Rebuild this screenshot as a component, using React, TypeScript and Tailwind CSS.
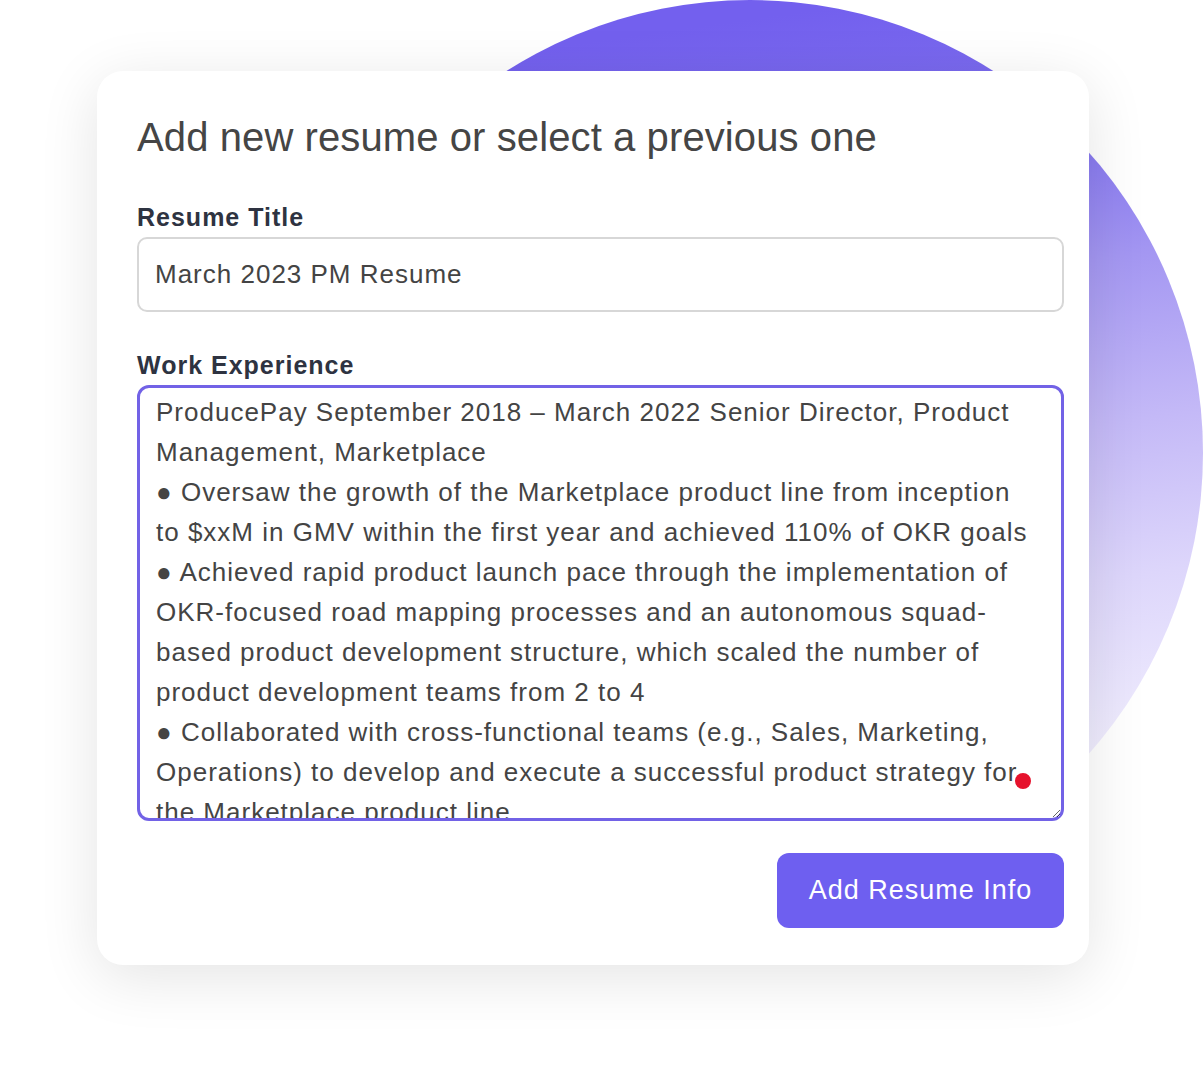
import React from 'react';

const experience = `ProducePay September 2018 – March 2022 Senior Director, Product Management, Marketplace
● Oversaw the growth of the Marketplace product line from inception to $xxM in GMV within the first year and achieved 110% of OKR goals
● Achieved rapid product launch pace through the implementation of OKR-focused road mapping processes and an autonomous squad-based product development structure, which scaled the number of product development teams from 2 to 4
● Collaborated with cross-functional teams (e.g., Sales, Marketing, Operations) to develop and execute a successful product strategy for the Marketplace product line`;

export default function App() {
  return (
    <div className="relative w-[1203px] h-[1074px] overflow-hidden bg-white pt-[71px] pl-[97px] font-['Liberation_Sans',Arial,sans-serif]">
      {/* background blob */}
      <div className="absolute left-[297px] top-0 w-[906px] h-[906px] rounded-full bg-[linear-gradient(172deg,#7360ee_8%,#7f70ef_22%,#a497f2_36%,#c4b9f7_52%,#ddd6fb_67%,#f1eefe_84%,#fbfaff_100%)]" />

      <div className="relative z-10 w-[992px] rounded-[26px] bg-white pt-[42px] pb-[37px] pl-10 pr-[25px] shadow-[0_12px_60px_rgba(0,0,0,0.11)]">
        <h2 className="text-[40px] leading-[48px] tracking-[0.1px] text-[#454545]">Add new resume or select a previous one</h2>

        <label className="block mt-10 mb-1 text-[25px] leading-[32px] font-bold tracking-[1px] text-[#2e3341]">
          Resume Title
        </label>
        <input
          defaultValue="March 2023 PM Resume"
          className="block w-full h-[75px] rounded-[10px] border-2 border-[#d7d7d7] px-4 text-[26px] tracking-[1px] text-[#444] outline-none"
        />

        <label className="block mt-[37px] mb-1 text-[25px] leading-[32px] font-bold tracking-[1px] text-[#2e3341]">
          Work Experience
        </label>
        <div className="relative">
          <textarea
            defaultValue={experience}
            className="block w-full h-[436px] overflow-hidden rounded-[12px] border-[3px] border-[#7262e6] pl-4 pr-6 pt-1 text-[26px] leading-[40px] tracking-[1px] text-[#444] outline-none"
          />
          <span className="absolute left-[878px] top-[388px] w-4 h-4 rounded-full bg-[#e6122d]" />
        </div>

        <div className="flex justify-end mt-8">
          <button className="w-[287px] h-[75px] rounded-[12px] bg-[#6e5ff0] text-[27px] tracking-[1px] text-white">
            Add Resume Info
          </button>
        </div>
      </div>
    </div>
  );
}
